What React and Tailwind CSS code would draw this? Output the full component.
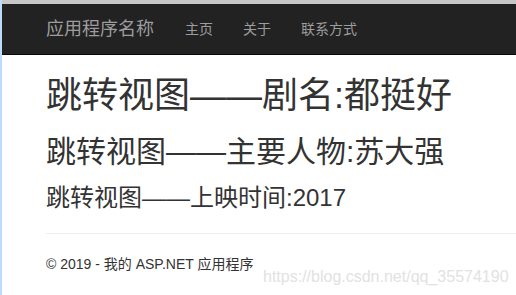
export default function App() {
  const font = { fontFamily: '"Liberation Sans", "Noto Sans CJK SC", sans-serif' };
  return (
    <div className="relative flex w-[516px] h-[295px] overflow-hidden bg-white" style={font}>
      {/* left selection strip */}
      <div className="w-[2px] shrink-0 bg-[#bcdcff]" />

      <div className="flex-1 flex flex-col">
        <div className="h-[4px] bg-[#c6c6c6]" />

        {/* navbar */}
        <nav className="h-[51px] bg-[#222] border-b border-[#080808] flex items-center pl-[44px]">
          <span className="text-[18px] leading-[20px] text-[#9d9d9d]">应用程序名称</span>
          <ul className="flex items-center ml-[31px] gap-[30px] text-[14px] leading-[20px] text-[#9d9d9d]">
            <li>主页</li>
            <li>关于</li>
            <li>联系方式</li>
          </ul>
        </nav>

        {/* body content */}
        <main className="pl-[44px] text-[#333]">
          <h1 className="mt-[21px] text-[36px] leading-[40px]">跳转视图——剧名:都挺好</h1>
          <h2 className="mt-[19px] text-[30px] leading-[33px]">跳转视图——主要人物:苏大强</h2>
          <h3 className="mt-[17px] text-[24px] leading-[26px]">跳转视图——上映时间:2017</h3>
          <hr className="mt-[22px] border-t border-[#eee]" />
          <footer className="mt-[20px] text-[14px] leading-[20px]">© 2019 - 我的 ASP.NET 应用程序</footer>
        </main>
      </div>

      {/* watermark */}
      <span className="absolute left-[263px] top-[268px] text-[16px] leading-[18px] text-[#e2e2e2]">
        https://blog.csdn.net/qq_35574190
      </span>
    </div>
  );
}
